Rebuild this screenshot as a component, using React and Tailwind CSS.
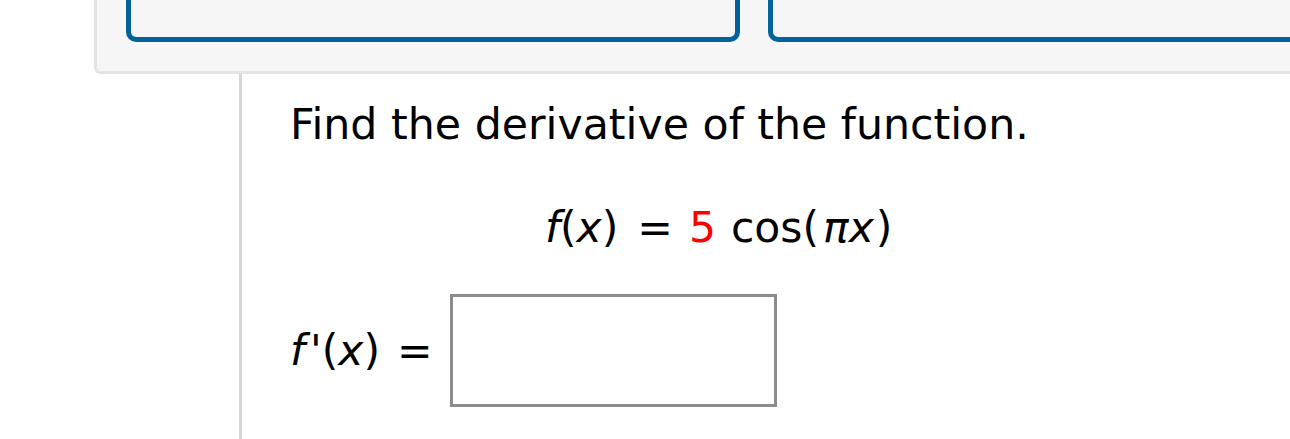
export default function App() {
  return (
    <div className="w-[1290px] h-[439px] overflow-hidden bg-white text-black" style={{ fontFamily: '"DejaVu Sans", Verdana, sans-serif' }}>
      {/* Header strip */}
      <div className="pl-[94px]">
        <div className="h-[74px] bg-[#f6f6f6] border-l-[3px] border-b-[3px] border-[#e4e4e4] rounded-bl-[6px] overflow-hidden flex gap-[28px] pl-[29px]">
          <div className="w-[614px] h-[52px] -mt-[10px] border-[5px] border-[#00639c] rounded-[10px] shrink-0" />
          <div className="w-[600px] h-[52px] -mt-[10px] border-[5px] border-[#00639c] rounded-[10px] shrink-0" />
        </div>
      </div>

      {/* Question body */}
      <div className="ml-[239px] border-l-[3px] border-[#d6d6d6] h-[365px] pl-[48px]">
        <p className="pt-[25px] text-[42.7px] leading-[50px] whitespace-nowrap">Find the derivative of the function.</p>

        <div className="mt-[54px] pl-[255px] text-[42.5px] leading-[50px] whitespace-nowrap flex items-baseline">
          <span className="italic">f</span>
          <span>(</span>
          <span className="italic">x</span>
          <span>)</span>
          <span className="ml-[19px] mr-[16px]">=</span>
          <span className="text-[#ff0000]">5</span>
          <span className="ml-[15px]">cos(</span>
          <span className="italic ml-[4px]">π</span>
          <span className="italic">x</span>
          <span className="ml-[2px]">)</span>
        </div>

        <div className="mt-[41px] flex items-center">
          <span className="text-[42.5px] leading-[50px] whitespace-nowrap flex items-baseline">
            <span className="italic">f</span>
            <span className="ml-[5px]">'</span>
            <span>(</span>
            <span className="italic">x</span>
            <span>)</span>
            <span className="ml-[17px]">=</span>
          </span>
          <div className="ml-[17px] w-[327px] h-[113px] border-[3px] border-[#8c8c8c] bg-white shrink-0" />
        </div>
      </div>
    </div>
  );
}
